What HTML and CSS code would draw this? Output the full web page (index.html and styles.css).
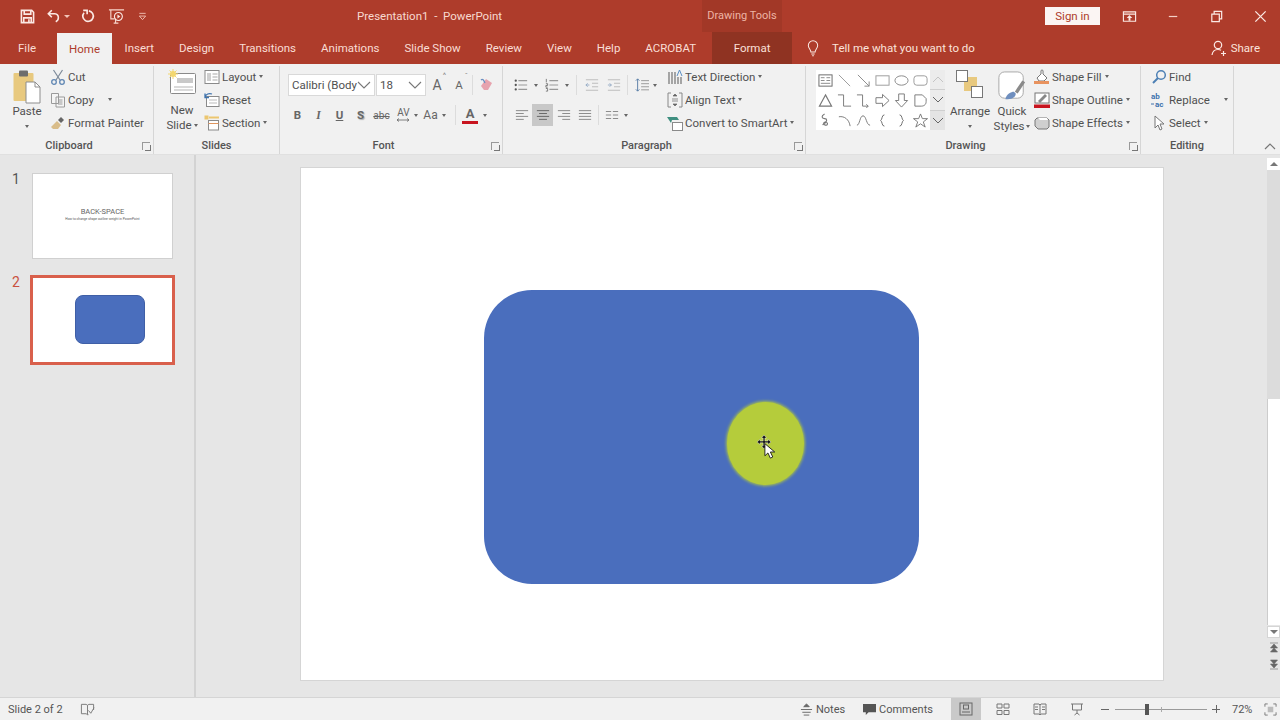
FILE: index.html
```html
<!DOCTYPE html>
<html lang="en">
<head>
<meta charset="utf-8">
<title>Presentation1 - PowerPoint</title>
<link rel="stylesheet" href="styles.css">
</head>
<body>
<div class="app">
  <header class="header">
    <div class="titlebar">
      <div class="qat">
        <svg class="qi save" viewBox="0 0 16 16"><path d="M1.5 1.5h11l2 2v11h-13z M4.5 1.5v4h7v-4 M4 14.500v-5h8v5 M9.500 11v3" fill="none" stroke="#fbe9e4" stroke-width="1.700"/></svg>
        <svg class="qi undo" viewBox="0 0 16 16"><path d="M5.500 1.500 1.500 5.500l4 4M2 5.500h7a4.500 4.500 0 0 1 4 4.500c0 2-1 3.500-3 4.500" fill="none" stroke="#fbe9e4" stroke-width="1.800"/></svg>
        <span class="qcaret"></span>
        <svg class="qi redo" viewBox="0 0 16 16"><path d="M9 2.200a6 6 0 1 1-5.500 2M2.500 1.500h4.500v4.500" fill="none" stroke="#fbe9e4" stroke-width="1.900"/></svg>
        <svg class="qi present" viewBox="0 0 18 18"><path d="M1 2h16M3 2v9.500h4M8 11.500v4M6 16h5" fill="none" stroke="#f7d4ca" stroke-width="1.200"/><circle cx="11" cy="9" r="4.200" fill="none" stroke="#fbe9e4" stroke-width="1.200"/><path d="M10 7l3 2-3 2z" fill="#fbe9e4"/></svg>
        <svg class="qi custom" viewBox="0 0 10 10"><path d="M1.500 1.500h7M1.500 4.500h7L5 8.500z" fill="none" stroke="#f2c4b8" stroke-width="1"/></svg>
      </div>
      <div class="doc-title">Presentation1&nbsp; -&nbsp; PowerPoint</div>
      <div class="context-label">Drawing Tools</div>
      <button class="signin">Sign in</button>
      <div class="winctl">
        <svg class="wi" viewBox="0 0 16 16"><path d="M1.500 3h13v10h-13zM1.500 5.500h13" fill="none" stroke="#fbe9e4" stroke-width="1.200"/><path d="M8 6.500l3 3H9v3H7v-3H5z" fill="#fbe9e4"/></svg>
        <svg class="wi" viewBox="0 0 16 16"><path d="M3 8h9" stroke="#f4cfc5" stroke-width="1.300"/></svg>
        <svg class="wi" viewBox="0 0 16 16"><path d="M3 5.500h8v8H3zM5.500 5V2.500h8v8H11.500" fill="none" stroke="#fbe9e4" stroke-width="1.300"/></svg>
        <svg class="wi" viewBox="0 0 16 16"><path d="M2.500 2.500l11 11M13.500 2.500l-11 11" stroke="#fbe9e4" stroke-width="1.400"/></svg>
      </div>
    </div>
    <nav class="tabs">
      <span class="tab tab-file">File</span>
      <span class="tab tab-active">Home</span>
      <span class="tab">Insert</span>
      <span class="tab">Design</span>
      <span class="tab">Transitions</span>
      <span class="tab">Animations</span>
      <span class="tab">Slide Show</span>
      <span class="tab">Review</span>
      <span class="tab">View</span>
      <span class="tab">Help</span>
      <span class="tab">ACROBAT</span>
      <span class="tab tab-context">Format</span>
      <svg class="bulb" viewBox="0 0 14 20"><path d="M4.500 14c0-3-3-4-3-7.500a5.500 5.500 0 0 1 11 0C12.500 10 9.500 11 9.500 14zM5 16.500h4M6 18.500h2" fill="none" stroke="#fbe9e4" stroke-width="1.200"/></svg>
      <span class="tell">Tell me what you want to do</span>
      <span class="share">
        <svg class="share-ic" viewBox="0 0 16 16"><circle cx="7" cy="5" r="3.700" fill="none" stroke="#fbe9e4" stroke-width="1.200"/><path d="M1 15c.5-3.500 3-5.500 6-5.500 1.300 0 2.300.3 3 .8M10 13.500h5M12.500 11v5" fill="none" stroke="#fbe9e4" stroke-width="1.200"/></svg>
        Share
      </span>
    </nav>
  </header>

  <section class="ribbon">
    <div class="group g-clip">
      <div class="gbody">
        <div class="big paste">
          <svg class="big-ic paste-ic" viewBox="0 0 28 34"><rect x="0.500" y="3" width="20" height="28" rx="1" fill="#e8c97f"/><rect x="6" y="0.500" width="9" height="6" rx="1" fill="#6d6d6d"/><path d="M13 12h9l5 5v16H13z" fill="#fff" stroke="#8d8d8d"/><path d="M22 12v5h5" fill="none" stroke="#8d8d8d"/></svg>
          <span class="big-label">Paste</span>
          <span class="caret big-caret"></span>
        </div>
        <div class="col col-clip">
          <div class="item">
            <svg class="ic" viewBox="0 0 16 16"><path d="M3.500 1l6.500 10M12.500 1L6 11" stroke="#7d8a99" stroke-width="1.200" fill="none"/><circle cx="4" cy="13" r="2.300" fill="none" stroke="#5f86b3" stroke-width="1.300"/><circle cx="12" cy="13" r="2.300" fill="none" stroke="#5f86b3" stroke-width="1.300"/></svg>
            <span>Cut</span>
          </div>
          <div class="item">
            <svg class="ic" viewBox="0 0 16 16"><path d="M1.500 1.500h7v10h-7zM6 5h8.500v10H6zM8 8h4.500M8 10h4.500M8 12h4.500" fill="#f5f5f5" stroke="#9a9a9a"/></svg>
            <span>Copy</span><span class="caret caret-far"></span>
          </div>
          <div class="item">
            <svg class="ic" viewBox="0 0 16 16"><path d="M1 12l6-6 4 4-3 4H3z" fill="#d9bd8a"/><path d="M8 5l3-3 3 3-3 3z" fill="#666"/></svg>
            <span>Format Painter</span>
          </div>
        </div>
      </div>
      <div class="glabel has-launch">Clipboard<span class="launch"></span></div>
    </div>

    <div class="group g-slides">
      <div class="gbody">
        <div class="big new-slide">
          <svg class="big-ic newslide-ic" viewBox="0 0 28 26"><rect x="2.500" y="4.500" width="25" height="20" rx="1" fill="#fff" stroke="#8a8a8a"/><rect x="9" y="9" width="16" height="5" fill="#c9c9c9"/><path d="M6 18h19M6 21h19" stroke="#b5b5b5"/><circle cx="5" cy="5" r="3" fill="#f3d76f"/><path d="M5 0v10M0 5h10M1.500 1.500l7 7M8.500 1.500l-7 7" stroke="#f3d76f"/></svg>
          <span class="big-label">New</span>
          <span class="big-label">Slide<span class="caret inline-caret"></span></span>
        </div>
        <div class="col">
          <div class="item">
            <svg class="ic" viewBox="0 0 16 16"><rect x="1" y="1.500" width="14" height="13" fill="#fff" stroke="#8a8a8a"/><rect x="3" y="4" width="4" height="8" fill="#cfcfcf"/><path d="M8.500 5h5M8.500 8h5M8.500 11h5" stroke="#a9a9a9"/></svg>
            <span>Layout</span><span class="caret"></span>
          </div>
          <div class="item">
            <svg class="ic" viewBox="0 0 16 16"><rect x="2.500" y="4.500" width="12.500" height="10" fill="#fff" stroke="#8a8a8a"/><path d="M5 8h8M5 11h8" stroke="#bbb"/><path d="M1 5c1-3 4-4 7-3M1 1.500V5.500h4" fill="none" stroke="#3e73ae" stroke-width="1.300"/></svg>
            <span>Reset</span>
          </div>
          <div class="item">
            <svg class="ic" viewBox="0 0 16 16"><rect x="0.500" y="0.500" width="4" height="4" fill="#ecc66f"/><path d="M5 2.500h10" stroke="#ecc66f" stroke-width="2"/><rect x="4.500" y="5.500" width="10" height="9.500" fill="#fff" stroke="#8a8a8a"/><path d="M4.500 8.500h10" stroke="#e0965e"/></svg>
            <span>Section</span><span class="caret"></span>
          </div>
        </div>
      </div>
      <div class="glabel">Slides</div>
    </div>

    <div class="group g-font">
      <div class="gbody gstack">
        <div class="frow frow-top">
          <div class="combo combo-font"><span class="combo-text">Calibri (Body</span><svg class="chev" viewBox="0 0 14 8"><path d="M1 1l6 6 6-6" fill="none" stroke="#777" stroke-width="1.100"/></svg></div>
          <div class="combo combo-size"><span class="combo-text">18</span><svg class="chev" viewBox="0 0 14 8"><path d="M1 1l6 6 6-6" fill="none" stroke="#777" stroke-width="1.100"/></svg></div>
          <span class="fmt grow">A<sup class="up">^</sup></span>
          <span class="fmt shrink">A<sup class="up">ˇ</sup></span>
          <span class="vsep sep-a"></span>
          <svg class="ic eraser" viewBox="0 0 16 16"><path d="M3 9l5-7 6 4-4 7H6z" fill="#e7a3ae"/><path d="M3 3c2-2 3 1 4 3" fill="none" stroke="#6a8fc0" stroke-width="1.300"/></svg>
        </div>
        <div class="frow frow-bottom">
          <b class="fb fb-b">B</b>
          <i class="fb fb-i">I</i>
          <u class="fb fb-u">U</u>
          <span class="fb fb-s">S</span>
          <s class="fb fb-abc">abc</s>
          <span class="fb fb-av">AV<svg class="av" viewBox="0 0 14 4"><path d="M1 2h12M1 2l2-1.500M1 2l2 1.500M13 2l-2-1.500M13 2l-2 1.500" stroke="#666" fill="none" stroke-width=".8"/></svg></span>
          <span class="caret c-av"></span>
          <span class="fb fb-aa">Aa</span>
          <span class="caret c-aa"></span>
          <span class="vsep sep-b"></span>
          <span class="fontcolor">A</span>
          <span class="caret c-fc"></span>
        </div>
      </div>
      <div class="glabel has-launch">Font<span class="launch"></span></div>
    </div>

    <div class="group g-para">
      <div class="gbody">
        <div class="gstack pleft">
          <div class="prow prow-top">
            <svg class="pi" viewBox="0 0 16 16"><path d="M5 3h10M5 8h10M5 13h10" stroke="#999" stroke-width="1.200"/><circle cx="2" cy="3" r="1.300" fill="#555"/><circle cx="2" cy="8" r="1.300" fill="#555"/><circle cx="2" cy="13" r="1.300" fill="#555"/></svg>
            <span class="caret p-c"></span>
            <svg class="pi pi-num" viewBox="0 0 16 16"><path d="M5 3h10M5 8h10M5 13h10" stroke="#999" stroke-width="1.200"/><path d="M1.500 1v4M1 6.500h2v2H1v2h2M1 12h2v3H1" stroke="#555" fill="none" stroke-width=".8"/></svg>
            <span class="caret p-c"></span>
            <span class="vsep sep-c"></span>
            <svg class="pi pi-in" viewBox="0 0 16 16"><path d="M1 2h14M8 6h7M8 10h7M1 14h14" stroke="#bbb" stroke-width="1.100"/><path d="M1 8h4M3 6L1 8l2 2" stroke="#8fa6c2" fill="none"/></svg>
            <svg class="pi pi-in2" viewBox="0 0 16 16"><path d="M1 2h14M8 6h7M8 10h7M1 14h14" stroke="#bbb" stroke-width="1.100"/><path d="M1 8h4M3 6l2 2-2 2" stroke="#8fa6c2" fill="none"/></svg>
            <span class="vsep sep-d"></span>
            <svg class="pi pi-ls" viewBox="0 0 16 16"><path d="M7 3h9M7 6.500h9M7 10h9M7 13.500h9" stroke="#999" stroke-width="1.100"/><path d="M3 1v14M1 3l2-2 2 2M1 13l2 2 2-2" stroke="#5b7fa8" fill="none" stroke-width="1.100"/></svg>
            <span class="caret p-c3"></span>
          </div>
          <div class="prow prow-bottom">
            <span class="al"><svg class="pi" viewBox="0 0 16 16"><path d="M1 3h14M1 6.300h9M1 9.600h14M1 13h9" stroke="#888" stroke-width="1.100"/></svg></span>
            <span class="al al-on"><svg class="pi" viewBox="0 0 16 16"><path d="M1 3h14M3.500 6.300h9M1 9.600h14M3.500 13h9" stroke="#666" stroke-width="1.100"/></svg></span>
            <span class="al"><svg class="pi" viewBox="0 0 16 16"><path d="M1 3h14M6 6.300h9M1 9.600h14M6 13h9" stroke="#888" stroke-width="1.100"/></svg></span>
            <span class="al"><svg class="pi" viewBox="0 0 16 16"><path d="M1 3h14M1 6.300h14M1 9.600h14M1 13h14" stroke="#888" stroke-width="1.100"/></svg></span>
            <span class="vsep sep-e"></span>
            <svg class="pi pi-col" viewBox="0 0 16 16"><path d="M1 4h6M9 4h6M1 8h6M9 8h6M1 12h6M9 12h6" stroke="#8d8d8d" stroke-width="1.200"/></svg>
            <span class="caret p-c5"></span>
          </div>
        </div>
        <div class="col col-para">
          <div class="item">
            <svg class="ic" viewBox="0 0 16 16"><path d="M2 3v12M5 3v12M8 3v12M11 8v7M14 8v7" stroke="#666" stroke-width="1.100"/><path d="M10 7l2.500-6L15 7" fill="none" stroke="#5b8fc4"/></svg>
            <span>Text Direction</span><span class="caret"></span>
          </div>
          <div class="item">
            <svg class="ic" viewBox="0 0 16 16"><path d="M4 1H1v14h3M12 1h3v14h-3" fill="none" stroke="#888"/><path d="M5 7h6M5 9h6M8 2l-2 2h4zM8 14l-2-2h4z" stroke="#666" fill="#666" stroke-width=".7"/></svg>
            <span>Align Text</span><span class="caret"></span>
          </div>
          <div class="item">
            <svg class="ic" viewBox="0 0 16 16"><path d="M0 2h10l2 3H5l-1 3-2-3z" fill="#3f8f80"/><rect x="5.500" y="7.500" width="10" height="8" fill="#fff" stroke="#8a8a8a"/></svg>
            <span>Convert to SmartArt</span><span class="caret"></span>
          </div>
        </div>
      </div>
      <div class="glabel has-launch">Paragraph<span class="launch"></span></div>
    </div>

    <div class="group g-draw">
      <div class="gbody">
        <div class="gallery">
          <div class="shapes">
            <svg class="sh" viewBox="0 0 16 16"><rect x="1" y="2" width="14" height="12" fill="none" stroke="#666"/><path d="M3 5h4M3 8h4M3 11h10M9 5h4M9 8h4" stroke="#888"/></svg>
            <svg class="sh" viewBox="0 0 16 16"><path d="M2 2l12 12" stroke="#999"/></svg>
            <svg class="sh" viewBox="0 0 16 16"><path d="M2 2l12 12M14 9v5H9" stroke="#888" fill="none"/></svg>
            <svg class="sh" viewBox="0 0 16 16"><rect x="1" y="3" width="14" height="10" fill="none" stroke="#999"/></svg>
            <svg class="sh" viewBox="0 0 16 16"><ellipse cx="8" cy="8" rx="7" ry="5" fill="none" stroke="#888"/></svg>
            <svg class="sh" viewBox="0 0 16 16"><rect x="1" y="3" width="14" height="10" rx="3" fill="none" stroke="#999"/></svg>
            <svg class="sh" viewBox="0 0 16 16"><path d="M8 2l6.500 12h-13z" fill="none" stroke="#777" stroke-width="1.200"/></svg>
            <svg class="sh" viewBox="0 0 16 16"><path d="M1 2h6v12h8" fill="none" stroke="#777"/></svg>
            <svg class="sh" viewBox="0 0 16 16"><path d="M1 2h6v12h6M11 12l2 2-2 2" fill="none" stroke="#777"/></svg>
            <svg class="sh" viewBox="0 0 16 16"><path d="M1 5h7V1.500L15 8l-7 6.500V11H1z" fill="none" stroke="#777"/></svg>
            <svg class="sh" viewBox="0 0 16 16"><path d="M5 1h6v7h3.500L8 15 1.500 8H5z" fill="none" stroke="#777"/></svg>
            <svg class="sh" viewBox="0 0 16 16"><path d="M2 2h8l4 4v3c0 4-3 5-5 5H2z" fill="none" stroke="#777"/></svg>
            <svg class="sh" viewBox="0 0 16 16"><path d="M7 1C3 3 4 6 7 6s3 3 0 4 2 5 3 2-4-2-5 1" fill="none" stroke="#777" stroke-width="1.200"/></svg>
            <svg class="sh" viewBox="0 0 16 16"><path d="M2 4c6-1 11 3 12 10" fill="none" stroke="#777"/></svg>
            <svg class="sh" viewBox="0 0 16 16"><path d="M1 13C4 13 4 3 7.500 3S11 13 15 13" fill="none" stroke="#777"/></svg>
            <svg class="sh" viewBox="0 0 16 16"><path d="M10 2C7 2 8 7 6 8c2 1 1 6 4 6" fill="none" stroke="#666"/></svg>
            <svg class="sh" viewBox="0 0 16 16"><path d="M6 2c3 0 2 5 4 6-2 1-1 6-4 6" fill="none" stroke="#666"/></svg>
            <svg class="sh" viewBox="0 0 16 16"><path d="M8 1l2 5h5.500l-4.500 3.500 2 5.500-5-3.500L3 15l2-5.500L.5 6H6z" fill="none" stroke="#777"/></svg>
          </div>
          <div class="gscroll">
            <span class="gs"><svg class="gchev" viewBox="0 0 12 7"><path d="M1 6l5-5 5 5" fill="none" stroke="#c4c4c4"/></svg></span>
            <span class="gs"><svg class="gchev" viewBox="0 0 12 7"><path d="M1 1l5 5 5-5" fill="none" stroke="#666"/></svg></span>
            <span class="gs gs-more"><svg class="gchev" viewBox="0 0 12 7"><path d="M1 1l5 5 5-5" fill="none" stroke="#666"/></svg></span>
          </div>
        </div>
        <div class="big arrange">
          <svg class="big-ic arrange-ic" viewBox="0 0 28 28"><rect x="8" y="7" width="13" height="14" fill="#e8c97f"/><rect x="0.500" y="0.500" width="11" height="11" fill="#fff" stroke="#777"/><rect x="15.500" y="16.500" width="11" height="11" fill="#fff" stroke="#777"/></svg>
          <span class="big-label">Arrange</span>
          <span class="caret big-caret"></span>
        </div>
        <div class="big quick">
          <svg class="big-ic quick-ic" viewBox="0 0 30 32"><rect x="1" y="1" width="26" height="28" rx="6" fill="#fff" stroke="#a5a5a5"/><path d="M8 30c1-6 6-8 9-8l2 2c0 3-3 7-11 6z" fill="#6f8fbf"/><path d="M18 22l8-12 3 2-8 12z" fill="#8a8a8a"/></svg>
          <span class="big-label">Quick</span>
          <span class="big-label">Styles<span class="caret inline-caret"></span></span>
        </div>
        <div class="col col-shape">
          <div class="item">
            <svg class="ic" viewBox="0 0 16 16"><path d="M3 9l4-4V2c0-1.500 2-1.500 2 0v3l4 4-3 3H5z" fill="#fff" stroke="#777"/><path d="M0 12h15v3H0z" fill="#e8935f"/></svg>
            <span>Shape Fill</span><span class="caret"></span>
          </div>
          <div class="item">
            <svg class="ic" viewBox="0 0 16 16"><rect x="1" y="1" width="14" height="10" fill="#fff" stroke="#777"/><path d="M4 9l7-7 2 2-7 7z" fill="#888"/><rect x="0" y="12.500" width="16" height="3.500" fill="#c8141f"/></svg>
            <span>Shape Outline</span><span class="caret"></span>
          </div>
          <div class="item">
            <svg class="ic" viewBox="0 0 16 16"><path d="M3 3h10l2 2v7l-2 2H4l-3-3V5z" fill="#cfcfcf" stroke="#777"/><path d="M4 3h9l1 2H6z" fill="#fff"/></svg>
            <span>Shape Effects</span><span class="caret"></span>
          </div>
        </div>
      </div>
      <div class="glabel has-launch">Drawing<span class="launch"></span></div>
    </div>

    <div class="group g-edit">
      <div class="gbody">
        <div class="col">
          <div class="item">
            <svg class="ic" viewBox="0 0 16 16"><circle cx="10" cy="6" r="4.300" fill="none" stroke="#4d80b5" stroke-width="1.500"/><path d="M7 9l-5 5" stroke="#4d80b5" stroke-width="2"/></svg>
            <span>Find</span>
          </div>
          <div class="item">
            <svg class="ic" viewBox="0 0 16 16"><text class="abtxt" x="0" y="7">ab</text><text class="abtxt" x="4" y="15">ac</text><path d="M0 12h3" stroke="#3e73ae"/></svg>
            <span>Replace</span><span class="caret caret-far2"></span>
          </div>
          <div class="item">
            <svg class="ic" viewBox="0 0 16 16"><path d="M4 1v12l3-3 2 5 2-1-2-5h4z" fill="#fff" stroke="#777"/></svg>
            <span>Select</span><span class="caret"></span>
          </div>
        </div>
      </div>
      <div class="glabel">Editing</div>
    </div>
    <div class="collapse">
      <svg class="collapse-ic" viewBox="0 0 12 7"><path d="M1 6l5-5 5 5" fill="none" stroke="#777" stroke-width="1.200"/></svg>
    </div>
  </section>

  <main class="main">
    <aside class="thumbs">
      <div class="thumb-row">
        <span class="num">1</span>
        <div class="thumb thumb-title">
          <span class="t-title">BACK-SPACE</span>
          <span class="t-sub">How to change shape outline weight in PowerPoint</span>
        </div>
      </div>
      <div class="thumb-row thumb-row-on">
        <span class="num num-on">2</span>
        <div class="thumb thumb-on"><div class="t-shape"></div></div>
      </div>
    </aside>
    <div class="stage">
      <div class="slide">
        <div class="shape"></div>
        <div class="spot"></div>
        <svg class="cursor" viewBox="0 0 24 30"><path d="M8 0l3 3.500H9V7h3.500V5l3.500 3-3.500 3V9H9v3.500h2L8 16l-3-3.500h2V9H3.500v2L0 8l3.500-3v2H7V3.500H5z" fill="#111" stroke="#fff" stroke-width=".5"/><path d="M9 10v14l3.500-3.300 2.800 6 2.800-1.300-2.800-5.800h5z" fill="#fff" stroke="#111"/></svg>
      </div>
    </div>
    <div class="vscroll">
      <span class="sb-btn sb-up"></span>
      <span class="sb-thumb"></span>
      <span class="sb-track"></span>
      <span class="sb-btn sb-down"></span>
      <svg class="sb-page" viewBox="0 0 10 12"><path d="M1 1h8M5 2L1.500 6h7zM5 6L1.500 10h7z" fill="#666" stroke="#666" stroke-width=".6"/></svg>
      <svg class="sb-page" viewBox="0 0 10 12"><path d="M1 11h8M5 10L1.500 6h7zM5 6L1.500 2h7z" fill="#666" stroke="#666" stroke-width=".6"/></svg>
    </div>
  </main>

  <footer class="status">
    <span class="s-text">Slide 2 of 2</span>
    <svg class="s-spell" viewBox="0 0 16 16"><path d="M1.500 2.500h5l1.500 1v10l-1.500-1h-5zM8 3.500l1.500-1h5v6M8 13.500h1" fill="none" stroke="#777"/><path d="M9 9l2.500 3L15 6" fill="none" stroke="#777"/></svg>
    <span class="s-spacer"></span>
    <svg class="s-ic s-notes-ic" viewBox="0 0 14 14"><path d="M7 1L4 4h6zM1 7h12M2.500 10h9M4 13h6" stroke="#666" fill="#666" stroke-width="1"/></svg>
    <span class="s-text s-notes">Notes</span>
    <svg class="s-ic s-com-ic" viewBox="0 0 16 14"><path d="M1 1h14v9H7l-3 3v-3H1z" fill="#555"/></svg>
    <span class="s-text s-com">Comments</span>
    <span class="view view-on"><svg class="v-ic" viewBox="0 0 14 14"><rect x="1" y="1" width="12" height="12" fill="none" stroke="#666"/><rect x="4.500" y="3" width="5" height="4" fill="none" stroke="#666"/><path d="M3 10h8" stroke="#666"/></svg></span>
    <span class="view"><svg class="v-ic" viewBox="0 0 14 14"><path d="M1 2h5v4H1zM8 2h5v4H8zM1 8.500h5v4H1zM8 8.500h5v4H8z" fill="none" stroke="#777"/></svg></span>
    <span class="view"><svg class="v-ic" viewBox="0 0 14 14"><path d="M1 2h5l1 1 1-1h5v10H8l-1 1-1-1H1zM7 3v10M9 5h3M9 7.500h3M2 5h3M2 7.500h3" fill="none" stroke="#777"/></svg></span>
    <span class="view"><svg class="v-ic" viewBox="0 0 14 14"><path d="M1 2h12M2.500 2v6h9V2M7 8v3M4.500 13L7 11l2.500 2" fill="none" stroke="#777"/></svg></span>
    <span class="zoom-minus"></span>
    <span class="zoom-track"><span class="zoom-tick"></span><span class="zoom-knob"></span></span>
    <span class="zoom-plus"></span>
    <span class="s-text s-pct">72%</span>
    <svg class="s-fit" viewBox="0 0 14 14"><path d="M1 4V1h3M10 1h3v3M13 10v3h-3M4 13H1v-3" fill="none" stroke="#777"/><rect x="4" y="4" width="6" height="6" fill="#bbb"/></svg>
  </footer>
</div>
</body>
</html>
```

FILE: styles.css
```css
* { box-sizing: border-box; }
html, body { margin: 0; padding: 0; }
body { font-family: Roboto, "Liberation Sans", sans-serif; font-size: 11.500px; color: #505050; }
svg { display: block; flex: none; }
.app { width: 1280px; height: 720px; display: flex; flex-direction: column; overflow: hidden; background: #e6e6e6; }

/* header */
.header { background: #ae3c2b; color: #f9ddd5; flex: none; height: 64px; display: flex; flex-direction: column; }
.titlebar { height: 32px; display: flex; align-items: center; }
.titlebar > * { flex: none; }
.qat { display: flex; align-items: center; width: 357px; padding-left: 20px; }
.qi.save { width: 15px; height: 15px; }
.qi.undo { width: 14px; height: 14px; margin-left: 12px; }
.qcaret { width: 0; height: 0; border: 3px solid transparent; border-top: 3px solid #f2c4b8; border-bottom: 0; margin-left: 3px; }
.qi.redo { width: 14px; height: 14px; margin-left: 11px; }
.qi.present { width: 17px; height: 17px; margin-left: 13px; }
.qi.custom { width: 9px; height: 9px; margin-left: 13px; }
.doc-title { width: 345px; font-size: 11.500px; color: #f7d9d0; }
.context-label { width: 80px; height: 32px; background: #a23827; text-align: center; line-height: 32px; font-size: 11px; color: #eeb4a5; }
.signin { margin-left: 263px; width: 55px; height: 18px; border: 0; padding: 0; background: #fbf5f3; color: #ae3c2b; font: 11.500px Roboto, sans-serif; }
.winctl { display: flex; align-items: center; margin-left: 22px; }
.wi { width: 15px; height: 15px; margin-right: 28.500px; }
.wi:last-child { margin-right: 0; }
.tabs { height: 32px; display: flex; align-items: stretch; font-size: 11.500px; }
.tab { display: flex; align-items: center; padding: 0 12.500px; color: #f9ddd5; flex: none; }
.tab-file { padding: 0 21px 0 18px; }
.tab-active { background: #f1f1f1; color: #ae3c2b; padding: 0 12px; width: 55px; margin-top: 1px; justify-content: center; }
.tab-context { background: #8f3322; width: 80px; justify-content: center; padding: 0; margin-left: 3.500px; color: #fbe0d8; }
.bulb { width: 12px; height: 17px; align-self: center; margin-left: 15px; }
.tell { align-self: center; margin-left: 13px; color: #fbe3dc; }
.share { display: flex; align-items: center; margin-left: auto; padding-right: 20px; gap: 4px; color: #fbe3dc; }
.share-ic { width: 16px; height: 16px; }

/* ribbon */
.ribbon { flex: none; height: 91px; background: #f1f1f1; display: flex; padding-top: 2px; border-bottom: 1px solid #e0e0e0; }
.group { display: flex; flex-direction: column; height: 88px; border-right: 1px solid #d6d6d6; flex: none; }
.g-clip { width: 154px; } .g-slides { width: 126px; } .g-font { width: 223px; }
.g-para { width: 303px; } .g-draw { width: 335px; } .g-edit { width: 93px; }
.gbody { height: 69px; display: flex; }
.gstack { flex-direction: column; }
.glabel { position: relative; height: 19px; text-align: center; line-height: 21px; font-size: 11px; font-weight: 500; color: #555; }
.has-launch { padding-right: 15px; }
.launch { position: absolute; right: 3px; top: 7px; width: 8px; height: 8px; border: 1px solid #999; border-width: 1px 0 0 1px; }
.launch::after { content: ""; position: absolute; right: -1px; bottom: -1px; width: 5px; height: 5px; border: solid #777; border-width: 0 1px 1px 0; }
.col { display: flex; flex-direction: column; margin-top: -1px; }
.item { height: 23px; display: flex; align-items: center; white-space: nowrap; }
.ic { width: 16px; height: 16px; margin-right: 2px; }
.caret { display: inline-block; width: 0; height: 0; border: 2.500px solid transparent; border-top: 3px solid #666; border-bottom: 0; margin-left: 3px; flex: none; }
.caret-far { margin-left: 14px; }
.caret-far2 { margin-left: 14px; }
.inline-caret { vertical-align: 2px; margin-left: 2px; }
.big { display: flex; flex-direction: column; align-items: center; line-height: 15px; }
.big-caret { margin: 6px 0 0; }
.big-ic { margin-bottom: 2px; }

.paste { width: 38px; margin: 0 4px 0 8px; padding-top: 4px; }
.paste-ic { width: 28px; height: 34px; margin-bottom: 0; }
.new-slide { width: 34px; margin: 0 5px 0 11px; padding-top: 3px; }
.newslide-ic { width: 28px; height: 26px; margin-bottom: 8px; }

/* font */
.g-font .gbody { padding-left: 8px; }
.frow { display: flex; align-items: center; }
.frow-top { height: 22px; margin-top: 8px; }
.frow-bottom { height: 22px; margin-top: 8px; padding-left: 4px; color: #666; }
.combo { height: 22px; background: #fff; border: 1px solid #d9d9d9; display: flex; align-items: center; justify-content: space-between; padding: 0 3px; font-size: 11.500px; flex: none; }
.combo-text { white-space: nowrap; }
.combo-font { width: 87px; }
.combo-size { width: 50px; margin-left: 1px; }
.chev { width: 14px; height: 8px; }
.fmt { font-size: 14px; position: relative; color: #666; width: 22px; text-align: center; flex: none; }
.fmt.shrink { font-size: 11.500px; }
.up { position: absolute; top: -6px; right: 2px; font-size: 8px; color: #888; }
.vsep { width: 1px; height: 20px; background: #dcdcdc; flex: none; }
.sep-a { margin-left: 2px; }
.eraser { margin-left: 5px; }
.fb { font-size: 11.500px; text-align: center; flex: none; }
.fb-b { width: 11px; } .fb-i { width: 11px; margin-left: 10px; font-family: "Liberation Serif", serif; font-weight: 700; }
.fb-u { width: 11px; margin-left: 10px; font-weight: 700; } .fb-s { width: 11px; margin-left: 10px; font-weight: 700; text-shadow: 1px 1px 1px #aaa; }
.fb-abc { width: 17px; margin-left: 7px; font-size: 10px; } .fb-av { width: 15px; margin-left: 6px; line-height: 10px; font-size: 10px; }
.av { width: 14px; height: 4px; }
.c-av { margin-left: 3px; } .fb-aa { width: 17px; margin-left: 4px; font-size: 12px; } .c-aa { margin-left: 3px; }
.sep-b { margin-left: 9px; }
.fontcolor { width: 16px; margin-left: 6px; height: 17px; line-height: 14px; border-bottom: 3px solid #c8141f; text-align: center; font-weight: 700; font-size: 13px; color: #666; flex: none; }
.c-fc { margin-left: 5px; }

/* paragraph */
.pleft { display: flex; flex-direction: column; width: 164px; padding-left: 11px; flex: none; }
.prow { display: flex; align-items: center; }
.prow-top { height: 22px; margin-top: 8px; }
.prow-bottom { height: 22px; margin-top: 8px; margin-left: -3px; }
.pi { width: 14px; height: 14px; }
.p-c { margin-left: 6px; }
.p-c3 { margin-left: 3.500px; }
.p-c5 { margin-left: 5px; }
.pi-num { margin-left: 7px; }
.sep-c { margin-left: 7px; }
.pi-in { margin-left: 8px; } .pi-in2 { margin-left: 8px; }
.sep-d { margin-left: 6px; } .pi-ls { margin-left: 7px; }
.al { width: 21px; height: 22px; display: flex; align-items: center; justify-content: center; flex: none; }
.al-on { background: #c8c8c8; }
.sep-e { margin-left: 3px; } .pi-col { margin-left: 6px; }

/* drawing */
.gallery { display: flex; width: 129px; height: 60px; margin: 4px 5px 0 10px; background: #fff; flex: none; }
.shapes { flex: 1; display: grid; grid-template-columns: repeat(6, 19px); grid-auto-rows: 20px; justify-items: center; align-items: center; }
.sh { width: 15px; height: 15px; }
.gscroll { width: 16px; display: flex; flex-direction: column; background: #ececec; }
.gs { flex: 1; display: flex; align-items: center; justify-content: center; border-bottom: 1px solid #cfcfcf; }
.gs-more { border-bottom: 0; background: #e4e4e4; }
.gchev { width: 12px; height: 7px; }
.arrange { width: 40px; margin-right: 2px; padding-top: 4px; }
.arrange-ic { width: 28px; height: 28px; margin-bottom: 6px; }
.quick { width: 40px; padding-top: 5px; }
.quick-ic { width: 30px; height: 30px; margin-bottom: 3px; }
.col-shape { margin-left: 2px; }

/* editing */
.g-edit .col { padding-left: 10px; }
.abtxt { font: 700 8px Roboto, sans-serif; fill: #3e73ae; }
.collapse { flex: 1; display: flex; justify-content: flex-end; align-items: flex-end; padding: 0 4px 4px 0; }
.collapse-ic { width: 12px; height: 7px; }

/* main */
.main { flex: 1; display: flex; min-height: 0; background: #e6e6e6; }
.thumbs { width: 196px; flex: none; border-right: 2px solid #d3d3d3; padding-top: 18px; display: flex; flex-direction: column; gap: 17px; }
.thumb-row { display: flex; }
.num { width: 32px; padding-left: 12px; font-size: 14px; line-height: 13px; color: #555; }
.num-on { color: #c9513f; width: 30px; }
.thumb { width: 141px; height: 86px; background: #fff; border: 1px solid #d0d0d0; }
.thumb-title { display: flex; flex-direction: column; align-items: center; padding-top: 33px; }
.t-title { font-size: 7.500px; line-height: 9px; color: #666; }
.t-sub { font-size: 3.300px; line-height: 6px; color: #555; white-space: nowrap; }
.thumb-on { width: 145px; height: 90px; border: 3px solid #d9604c; padding: 17px 0 0 42px; margin-top: -1px; }
.t-shape { width: 70px; height: 49px; background: #4a6ebd; border-radius: 8px; border: 1px solid #3f5fa6; }
.stage { flex: 1; padding: 12px 0 0 104px; }
.slide { position: relative; width: 864px; height: 514px; background: #fff; border: 1px solid #d5d5d5; }
.shape { position: absolute; left: 183px; top: 122px; width: 435px; height: 294px; background: #4a6ebd; border-radius: 48px; }
.spot { position: absolute; left: 426px; top: 234px; width: 77px; height: 83px; border-radius: 50%; background: #b5cc3b; box-shadow: 0 0 3px 1px #a9c14a; }
.cursor { position: absolute; left: 456px; top: 267px; width: 21px; height: 26px; }
.vscroll { width: 13px; flex: none; display: flex; flex-direction: column; align-items: stretch; padding-top: 3px; background: #e6e6e6; }
.sb-btn { height: 12px; background: #fff; display: flex; align-items: center; justify-content: center; flex: none; }
.sb-up::after { content: ""; border: 4px solid transparent; border-bottom: 4px solid #777; border-top: 0; }
.sb-down::after { content: ""; border: 4px solid transparent; border-top: 4px solid #777; border-bottom: 0; }
.sb-thumb { height: 229px; background: #dcdcdc; flex: none; }
.sb-track { height: 226px; background: #fff; flex: none; border-left: 1px solid #ccc; }
.sb-down { margin-top: 1px; border: 1px solid #d5d5d5; }
.sb-page { width: 10px; height: 12px; margin: 4px 0 0 2px; }

/* status */
.status { flex: none; height: 23px; background: #f1f1f1; border-top: 1px solid #d5d5d5; display: flex; align-items: center; padding-left: 8px; font-size: 11px; }
.status > * { flex: none; }
.s-text { color: #555; }
.s-spell { width: 15px; height: 15px; margin-left: 17px; }
.status .s-spacer { flex: 1; }
.s-ic { width: 13px; height: 13px; }
.s-notes { margin-left: 3px; width: 46px; }
.s-com-ic { width: 15px; }
.s-com { margin-left: 2px; width: 72px; }
.view { width: 37px; height: 22px; display: flex; align-items: center; justify-content: center; }
.view-on { background: #c9c9c9; width: 30px; margin-right: 3.500px; }
.v-ic { width: 14px; height: 14px; }
.zoom-minus { width: 8px; height: 1px; background: #666; margin-left: 5.500px; }
.zoom-track { position: relative; width: 92px; height: 1px; background: #9a9a9a; margin: 0 5px 0 6px; }
.zoom-knob { position: absolute; left: 30px; top: -5px; width: 4px; height: 11px; background: #555; }
.zoom-tick { position: absolute; left: 46px; top: -2px; width: 1px; height: 5px; background: #aaa; }
.zoom-plus { position: relative; width: 8px; height: 1px; background: #666; }
.zoom-plus::after { content: ""; position: absolute; left: 3.500px; top: -3.500px; width: 1px; height: 8px; background: #666; }
.s-pct { margin-left: 12px; width: 24px; }
.s-fit { width: 13px; height: 13px; margin: 0 3px 0 8px; }
```
